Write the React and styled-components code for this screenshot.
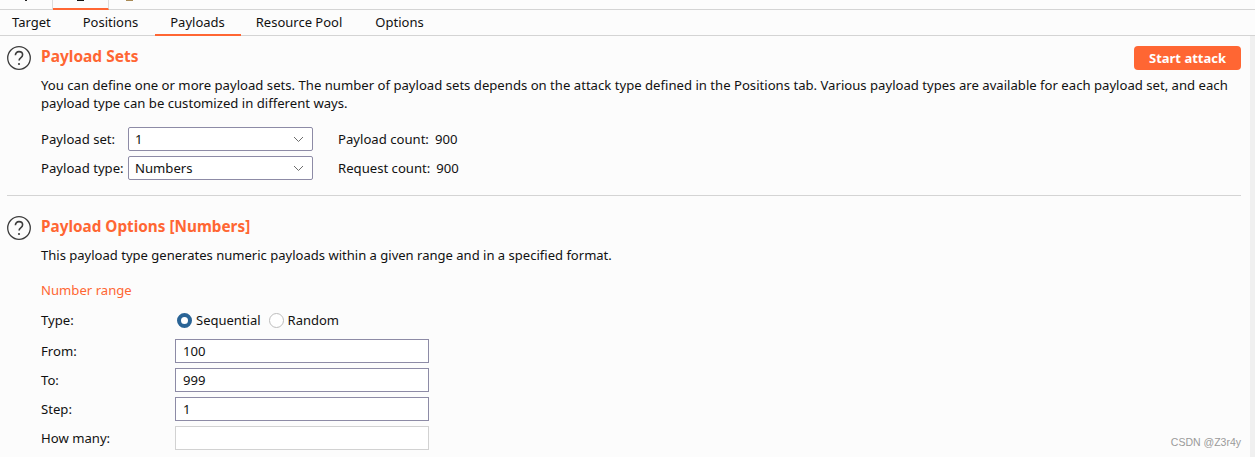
import React from "react";
import styled, { createGlobalStyle } from "styled-components";

const Global = createGlobalStyle`
  html, body { margin: 0; padding: 0; background: #fcfcfc; }
  body { font-family: "Noto Sans", "Open Sans", sans-serif; font-size: 13.13px; color: #111; }
`;
const Page = styled.div`
  width: 1255px; height: 457px; overflow: hidden; position: relative; background: #fcfcfc;
  display: flex; flex-direction: column;
`;
const TopStrip = styled.div`
  height: 9px; flex: none; display: flex; border-bottom: 1px solid #d4d4d4;
`;
const TopTab = styled.div`
  width: ${p => p.$w}px; height: ${p => p.$active ? 8 : 9}px; flex: none; display: flex; justify-content: center;
  border-right: ${p => p.$sep ? "1px solid #dcdcdc" : "none"};
  border-bottom: ${p => p.$active ? "2px solid #ff6633" : "none"};
  box-sizing: content-box;
`;
const Mark = styled.span`
  width: ${p => p.$w}px; height: 1px; background: ${p => p.$c};
`;
const TabBar = styled.div`
  height: 25px; flex: none; display: flex; align-items: flex-start; border-bottom: 1px solid #d4d4d4;
`;
const Tab = styled.div`
  height: 26px; box-sizing: border-box; padding: ${p => p.$active ? "1px" : "0"} ${p => p.$r ?? 16}px ${p => p.$active ? "0" : "1px"} ${p => p.$l ?? 16}px;
  display: flex; align-items: center; flex: none; position: relative;
  border-bottom: ${p => p.$active ? "2px solid #ff6633" : "none"};
  line-height: 1; font-size: 13px;
`;
const Section = styled.section`
  margin: 0 14px 0 7px;
  padding-top: ${p => p.$pt}px;
  border-bottom: ${p => p.$divider ? "1px solid #d4d4d4" : "none"};
  padding-bottom: ${p => p.$pb ?? 0}px;
`;
const Head = styled.div`
  display: flex; align-items: center; gap: 10px; height: 26px;
`;
const Title = styled.h2`
  margin: 0 0 3px; font-size: ${p => p.$size ?? 15.5}px; font-weight: 700; color: #ff6633; flex: 1; line-height: 1;
`;
const Attack = styled.button`
  width: 107px; height: 24px; border: 0; border-radius: 4px; background: #ff6633; color: #fff; font: 700 13px "Noto Sans", sans-serif; padding: 0;
`;
const Body = styled.div`
  padding-left: 34px;
`;
const Para = styled.p`
  margin: ${p => p.$mt ?? 0}px 0 0; line-height: 18px; width: 1195px; font-size: ${p => p.$size ?? 13.14}px;
`;
const FormRow = styled.div`
  display: flex; align-items: center; height: 24px; margin-top: ${p => p.$mt ?? 5}px;
`;
const SetLabel = styled.div` width: 87px; flex: none; `;
const Select = styled.div`
  width: 185px; height: 24px; box-sizing: border-box; border: 1px solid #8d8ba6; border-radius: 2px; background: #fff;
  display: flex; align-items: center; justify-content: space-between; padding: 0 8px 0 6px;
`;
const Count = styled.div` margin-left: 25px; display: flex; gap: 6px; `;
const Subhead = styled.div` color: #ff6633; margin-top: 17px; line-height: 18px; `;
const FieldRow = styled.div`
  display: flex; align-items: center; height: 24px; margin-top: ${p => p.$mt ?? 5}px;
`;
const FieldLabel = styled.div` width: 134px; flex: none; `;
const Field = styled.div`
  width: 254px; height: 24px; box-sizing: border-box; background: #fff; padding: 0 7px;
  border: 1px solid ${p => p.$disabled ? "#d2d2d2" : "#8d8ba6"};
  display: flex; align-items: center;
`;
const Radios = styled.div` display: flex; align-items: center; margin-left: 2px; font-size: 13px; `;
const RadioDot = styled.span`
  width: 15px; height: 15px; box-sizing: border-box; border-radius: 50%; flex: none;
  border: ${p => p.$on ? "4px solid #2a6496" : "1px solid #bdbdbd"}; background: #fff; margin-right: 4px;
`;
const RadioText = styled.span` margin-right: 8px; `;
const Watermark = styled.div`
  position: absolute; right: 14px; bottom: 9px; font: 10.5px "Liberation Sans", sans-serif; color: #9a9a9a;
`;
const Scroll = styled.div`
  position: absolute; right: 0; top: 36px; bottom: 0; width: 5px; background: #f0f0f0;
`;

const Help = () => (
  <svg width="24" height="26" viewBox="0 0 24 26" fill="none">
    <circle cx="12" cy="13" r="11.3" stroke="#3c3c3c" strokeWidth="1.3" />
    <path d="M8.4 10.2c0-2.2 1.6-3.6 3.6-3.6s3.6 1.3 3.6 3.2c0 1.5-.9 2.3-1.9 3-1 .7-1.6 1.3-1.6 2.7" stroke="#3c3c3c" strokeWidth="1.6" />
    <circle cx="12" cy="19" r="1.1" fill="#3c3c3c" />
  </svg>
);
const Chevron = () => (
  <svg width="11" height="7" viewBox="0 0 11 7" fill="none">
    <path d="M1 1l4.5 4.5L10 1" stroke="#6d6d6d" strokeWidth="1" />
  </svg>
);

export default function App() {
  return (
    <Page>
      <Global />
      <TopStrip>
        <TopTab $w={52} $sep><Mark $w={2} $c="#222" /></TopTab>
        <TopTab $w={55} $sep $active><Mark $w={7} $c="#111" /></TopTab>
        <TopTab $w={41}><Mark $w={7} $c="#a98a55" /></TopTab>
      </TopStrip>
      <TabBar>
        <Tab $l={12} $r={12}>Target</Tab>
        <Tab $l={20} $r={17}>Positions</Tab>
        <Tab $active $l={15} $r={16}>Payloads</Tab>
        <Tab $l={15} $r={17}>Resource Pool</Tab>
        <Tab $l={16}>Options</Tab>
      </TabBar>
      <Section $pt={9} $divider $pb={15}>
        <Head>
          <Help />
          <Title>Payload Sets</Title>
          <Attack>Start attack</Attack>
        </Head>
        <Body>
          <Para $mt={5}>You can define one or more payload sets. The number of payload sets depends on the attack type defined in the Positions tab. Various payload types are available for each payload set, and each payload type can be customized in different ways.</Para>
          <FormRow $mt={15}>
            <SetLabel>Payload set:</SetLabel>
            <Select>1<Chevron /></Select>
            <Count><span>Payload count:</span><span>900</span></Count>
          </FormRow>
          <FormRow>
            <SetLabel>Payload type:</SetLabel>
            <Select>Numbers<Chevron /></Select>
            <Count><span>Request count:</span><span>900</span></Count>
          </FormRow>
        </Body>
      </Section>
      <Section $pt={19}>
        <Head>
          <Help />
          <Title $size={15.3}>Payload Options [Numbers]</Title>
        </Head>
        <Body>
          <Para $mt={5} $size={13.04}>This payload type generates numeric payloads within a given range and in a specified format.</Para>
          <Subhead>Number range</Subhead>
          <FieldRow $mt={9}>
            <FieldLabel>Type:</FieldLabel>
            <Radios>
              <RadioDot $on /><RadioText>Sequential</RadioText>
              <RadioDot /><RadioText>Random</RadioText>
            </Radios>
          </FieldRow>
          <FieldRow $mt={7}><FieldLabel>From:</FieldLabel><Field>100</Field></FieldRow>
          <FieldRow><FieldLabel>To:</FieldLabel><Field>999</Field></FieldRow>
          <FieldRow><FieldLabel>Step:</FieldLabel><Field>1</Field></FieldRow>
          <FieldRow><FieldLabel>How many:</FieldLabel><Field $disabled /></FieldRow>
        </Body>
      </Section>
      <Scroll />
      <Watermark>CSDN @Z3r4y</Watermark>
    </Page>
  );
}
